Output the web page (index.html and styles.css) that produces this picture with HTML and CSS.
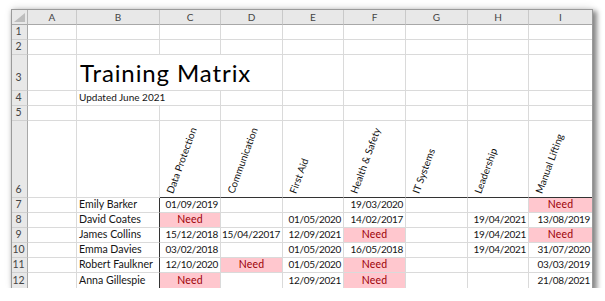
FILE: index.html
```html
<!DOCTYPE html>
<html lang="en">
<head>
<meta charset="utf-8">
<title>Training Matrix</title>
<link rel="stylesheet" href="styles.css">
</head>
<body>
<div class="frame">
  <div class="sheet">
    <!-- column headers -->
    <div class="ch corner"><span class="tri"></span></div>
    <div class="ch">A</div><div class="ch">B</div><div class="ch">C</div><div class="ch">D</div><div class="ch">E</div><div class="ch">F</div><div class="ch">G</div><div class="ch">H</div><div class="ch last">I</div>

    <!-- row 1 -->
    <div class="rh">1</div>
    <div class="c"></div><div class="c"></div><div class="c"></div><div class="c"></div><div class="c"></div><div class="c"></div><div class="c"></div><div class="c"></div><div class="c last"></div>
    <!-- row 2 -->
    <div class="rh">2</div>
    <div class="c"></div><div class="c"></div><div class="c"></div><div class="c"></div><div class="c"></div><div class="c"></div><div class="c"></div><div class="c"></div><div class="c last"></div>
    <!-- row 3 -->
    <div class="rh rh3">3</div>
    <div class="c"></div><div class="c title span3"><span>Training Matrix</span></div><div class="c"></div><div class="c"></div><div class="c"></div><div class="c"></div><div class="c last"></div>
    <!-- row 4 -->
    <div class="rh">4</div>
    <div class="c"></div><div class="c txt span2"><span>Updated June 2021</span></div><div class="c"></div><div class="c"></div><div class="c"></div><div class="c"></div><div class="c"></div><div class="c last"></div>
    <!-- row 5 -->
    <div class="rh">5</div>
    <div class="c"></div><div class="c"></div><div class="c"></div><div class="c"></div><div class="c"></div><div class="c"></div><div class="c"></div><div class="c"></div><div class="c last"></div>
    <!-- row 6 -->
    <div class="rh">6</div>
    <div class="c"></div><div class="c"></div>
    <div class="c hd"><span class="rot">Data Protection</span></div>
    <div class="c hd"><span class="rot">Communication</span></div>
    <div class="c hd"><span class="rot">First Aid</span></div>
    <div class="c hd"><span class="rot">Health &amp; Safety</span></div>
    <div class="c hd"><span class="rot">IT Systems</span></div>
    <div class="c hd"><span class="rot">Leadership</span></div>
    <div class="c hd last"><span class="rot">Manual Lifting</span></div>
    <!-- row 7 -->
    <div class="rh">7</div>
    <div class="c"></div><div class="c name">Emily Barker</div>
    <div class="c d">01/09/2019</div><div class="c d"></div><div class="c d"></div><div class="c d">19/03/2020</div><div class="c d"></div><div class="c d"></div><div class="c d need last">Need</div>
    <!-- row 8 -->
    <div class="rh">8</div>
    <div class="c"></div><div class="c name">David Coates</div>
    <div class="c d need">Need</div><div class="c d"></div><div class="c d">01/05/2020</div><div class="c d">14/02/2017</div><div class="c d"></div><div class="c d">19/04/2021</div><div class="c d last">13/08/2019</div>
    <!-- row 9 -->
    <div class="rh">9</div>
    <div class="c"></div><div class="c name">James Collins</div>
    <div class="c d">15/12/2018</div><div class="c d">15/04/22017</div><div class="c d">12/09/2021</div><div class="c d need">Need</div><div class="c d"></div><div class="c d">19/04/2021</div><div class="c d need last">Need</div>
    <!-- row 10 -->
    <div class="rh">10</div>
    <div class="c"></div><div class="c name">Emma Davies</div>
    <div class="c d">03/02/2018</div><div class="c d"></div><div class="c d">01/05/2020</div><div class="c d">16/05/2018</div><div class="c d"></div><div class="c d">19/04/2021</div><div class="c d last">31/07/2020</div>
    <!-- row 11 -->
    <div class="rh">11</div>
    <div class="c"></div><div class="c name">Robert Faulkner</div>
    <div class="c d">12/10/2020</div><div class="c d need">Need</div><div class="c d">01/05/2020</div><div class="c d need">Need</div><div class="c d"></div><div class="c d"></div><div class="c d last">03/03/2019</div>
    <!-- row 12 -->
    <div class="rh bottom">12</div>
    <div class="c bottom"></div><div class="c name bottom">Anna Gillespie</div>
    <div class="c d need bottom">Need</div><div class="c d bottom"></div><div class="c d bottom">12/09/2021</div><div class="c d need bottom">Need</div><div class="c d bottom"></div><div class="c d bottom"></div><div class="c d last bottom">21/08/2021</div>
  </div>
</div>
</body>
</html>
```

FILE: styles.css
```css
* { box-sizing: border-box; }

html, body {
  margin: 0;
  padding: 0;
  background: #ffffff;
}

body {
  font-family: Lato, "Noto Sans", sans-serif;
  font-size: 10px;
  color: #151515;
}

.frame {
  margin: 10px 0 0 12px;
  width: 580px;
  height: 278px;
  box-shadow: 0 0 0 1px #9a9a9a, 3px 3px 5px 2px rgba(0, 0, 0, 0.45), 0 -2px 8px rgba(0, 0, 0, 0.12);
  background: #ffffff;
}

.sheet {
  display: grid;
  grid-template-columns: 16px 49px 83px 61px 62px 61px 62px 62px 61px 63px;
  grid-template-rows: 15px 15px 15px 36px 15px 15px 77px repeat(6, 15px);
}

/* column header */
.ch {
  background: #e8e8e8;
  border-right: 1px solid #c9c9c9;
  border-bottom: 1px solid #a8a8a8;
  color: #444;
  display: flex;
  align-items: center;
  justify-content: center;
  line-height: 14px;
}
.ch.last { border-right: none; }

.corner {
  position: relative;
  border-right-color: #b5b5b5;
}
.tri {
  position: absolute;
  right: 2px;
  bottom: 2px;
  width: 0;
  height: 0;
  border-left: 11px solid transparent;
  border-bottom: 9px solid #bdbdbd;
}

/* row header */
.rh {
  background: #e8e8e8;
  border-right: 1px solid #a8a8a8;
  border-bottom: 1px solid #d0d0d0;
  color: #444;
  display: flex;
  align-items: flex-end;
  justify-content: center;
  padding-right: 2px;
  line-height: 13px;
  padding-bottom: 1px;
  font-size: 10.5px;
}
.rh3 { padding-bottom: 6px; }

/* cells */
.c {
  border-right: 1px solid #dadada;
  border-bottom: 1px solid #dadada;
  display: flex;
  align-items: flex-end;
  line-height: 13px;
  padding-bottom: 1px;
  white-space: nowrap;
  min-width: 0;
}
.c.last { border-right: none; }
.c.bottom, .rh.bottom { border-bottom: none; }

.span3 { grid-column: span 3; }
.span2 { grid-column: span 2; }

.title {
  font-size: 24px;
  letter-spacing: 0.9px;
  line-height: 24px;
  padding-left: 3px;
  padding-bottom: 5px;
  color: #000;
}

.txt { padding-left: 2px; }

.name {
  padding-left: 2px;
  border-right-color: #333;
  font-size: 10.6px;
}

.d {
  justify-content: flex-end;
  padding-right: 2px;
  letter-spacing: -0.3px;
}

.need {
  background: #ffc7ce;
  color: #9c0006;
  justify-content: center;
  padding-right: 0;
  letter-spacing: 0.2px;
  font-size: 10.5px;
}

.hd {
  border-bottom-color: #333;
  padding-left: 15px;
  padding-bottom: 2px;
}

.rot {
  display: block;
  white-space: nowrap;
  transform-origin: 0 100%;
  transform: rotate(-70deg);
  line-height: 12px;
  color: #111;
}
```
